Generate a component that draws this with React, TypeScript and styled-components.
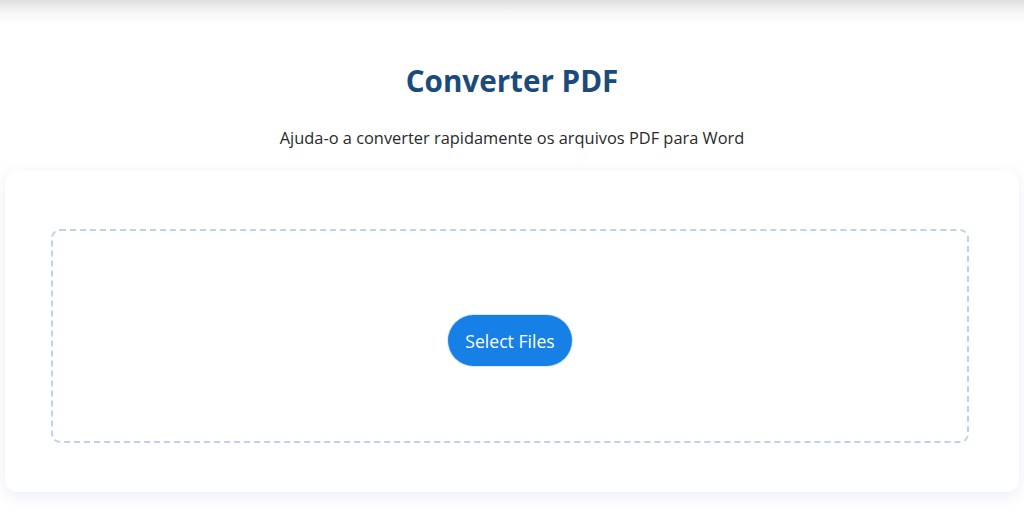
import React from "react";
import styled, { createGlobalStyle } from "styled-components";

const GlobalStyle = createGlobalStyle`
  html, body {
    margin: 0;
    padding: 0;
    background: #ffffff;
    font-family: "Open Sans", "Noto Sans", Arial, sans-serif;
  }
`;

const App = () => {
  return (
    <Page>
      <GlobalStyle />
      <TopShade />
      <Hero>
        <Title>Converter PDF</Title>
        <Subtitle>Ajuda-o a converter rapidamente os arquivos PDF para Word</Subtitle>
      </Hero>
      <Card>
        <DropZone>
          <SelectButton type="button">Select Files</SelectButton>
        </DropZone>
      </Card>
    </Page>
  );
};

export default App;

const Page = styled.div`
  width: 100%;
  min-height: 512px;
  display: flex;
  flex-direction: column;
  align-items: center;
`;

const TopShade = styled.div`
  width: 100%;
  height: 26px;
  background: linear-gradient(to bottom, rgba(0, 0, 0, 0.13), rgba(0, 0, 0, 0.03) 50%, rgba(0, 0, 0, 0));
`;

const Hero = styled.div`
  display: flex;
  flex-direction: column;
  align-items: center;
  padding-top: 37px;
`;

const Title = styled.h1`
  margin: 0;
  font-size: 29.6px;
  line-height: 36px;
  font-weight: 700;
  color: #1b4a7c;
`;

const Subtitle = styled.p`
  margin: 27px 0 0;
  font-size: 16.4px;
  line-height: 24px;
  color: #2a2a2a;
`;

const Card = styled.div`
  box-sizing: border-box;
  width: 1014px;
  margin-top: 21px;
  padding: 58px 50px 49px 46px;
  background: #ffffff;
  border-radius: 12px;
  box-shadow: 0 4px 16px rgba(90, 130, 200, 0.14);
`;

const DropZone = styled.div`
  box-sizing: border-box;
  height: 214px;
  border: 2px dashed #bcd2f2;
  border-radius: 9px;
  display: flex;
  align-items: center;
  justify-content: center;
`;

const SelectButton = styled.button`
  width: 124px;
  height: 51px;
  margin-top: 9px;
  border: none;
  border-radius: 26px;
  background: #1680e6;
  color: #ffffff;
  font-family: "Open Sans", "Noto Sans", Arial, sans-serif;
  font-size: 17.6px;
  cursor: pointer;
  box-shadow: 0 0 0 1px rgba(20, 100, 200, 0.15);
`;
